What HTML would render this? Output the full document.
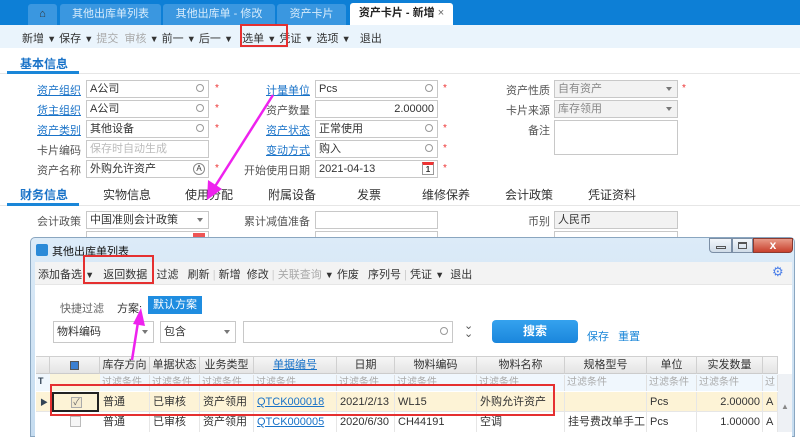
<!DOCTYPE html>
<html><head><meta charset="utf-8"><style>
*{margin:0;padding:0;box-sizing:border-box}
body{width:800px;height:432px;overflow:hidden;background:#fff;font-family:"Liberation Sans","Noto Sans CJK SC",sans-serif;font-size:11px;color:#333;position:relative}
.a{position:absolute;white-space:nowrap}
.tab{position:absolute;top:4px;height:21px;background:#3a97e0;color:#d8ecfb;border-radius:3px 3px 0 0;text-align:center;line-height:21px;font-size:11px}
.inp{position:absolute;height:18px;border:1px solid #c8c8c8;background:#fff;line-height:16px;padding-left:3px;font-size:11px}
.lbl{position:absolute;text-align:right;font-size:11px;color:#555}
.lk{color:#1a73c8;text-decoration:underline}
.st{position:absolute;color:#e33;font-size:10px}
.q{position:absolute;right:4px;top:3px;width:8px;height:8px;border:1.5px solid #999;border-radius:50%}
.dd{position:absolute;right:5px;top:6px;border:3px solid transparent;border-top:4px solid #777}
.th{position:absolute;top:357px;height:17px;line-height:17px;text-align:center;border-right:1px solid #d0d0d0;font-size:11px;color:#333}
.fc{position:absolute;top:375px;height:16px;line-height:16px;color:#aaa;padding-left:2px;border-right:1px solid #e0e0e0;font-size:10px;overflow:hidden}
.c{position:absolute;height:20px;line-height:20px;padding-left:3px;border-right:1px solid #e6e6e6;font-size:11px;overflow:hidden}
</style></head><body>
<div class="a" style="left:0;top:0;width:800px;height:25px;background:#0d7fd6"></div>
<div class="tab" style="left:28px;width:29px;color:#333">&#8962;</div>
<div class="tab" style="left:60px;width:101px">其他出库单列表</div>
<div class="tab" style="left:163px;width:112px">其他出库单 - 修改</div>
<div class="tab" style="left:277px;width:69px">资产卡片</div>
<div class="tab" style="left:350px;width:103px;background:#fff;color:#222;font-weight:bold;top:3px;height:22px">资产卡片 - 新增 <span style="color:#666;font-weight:normal">×</span></div>
<div class="a" style="left:0;top:25px;width:800px;height:23px;background:#eaf4fc"></div>
<div class="a" style="left:22px;top:30px;font-size:11px">新增 <small>▼</small> 保存 <small>▼</small> <span style="color:#aaa">提交</span>&nbsp; <span style="color:#aaa">审核</span> <small>▼</small> 前一 <small>▼</small> 后一 <small>▼</small>&nbsp;&nbsp; 选单 <small>▼</small> 凭证 <small>▼</small> 选项 <small>▼</small>&nbsp;&nbsp; 退出</div>
<div class="a" style="left:240px;top:24px;width:48px;height:23px;border:2px solid #e53030"></div>
<div class="a" style="left:20px;top:55px;color:#1a73c8;font-weight:bold;font-size:12px">基本信息</div>
<div class="a" style="left:0;top:73px;width:800px;height:1px;background:#e6e6e6"></div>
<div class="a" style="left:7px;top:71px;width:72px;height:3px;background:#1a86d8"></div>

<div class="lbl" style="left:0;width:81px;top:82px"><span class="lk">资产组织</span></div>
<div class="inp" style="left:86px;top:80px;width:123px">A公司<i class="q"></i></div><span class="st" style="left:215px;top:83px">*</span>
<div class="lbl" style="left:0;width:81px;top:102px"><span class="lk">货主组织</span></div>
<div class="inp" style="left:86px;top:100px;width:123px">A公司<i class="q"></i></div><span class="st" style="left:215px;top:103px">*</span>
<div class="lbl" style="left:0;width:81px;top:122px"><span class="lk">资产类别</span></div>
<div class="inp" style="left:86px;top:120px;width:123px">其他设备<i class="q"></i></div><span class="st" style="left:215px;top:123px">*</span>
<div class="lbl" style="left:0;width:81px;top:142px">卡片编码</div>
<div class="inp" style="left:86px;top:140px;width:123px;color:#bbb">保存时自动生成</div>
<div class="lbl" style="left:0;width:81px;top:162px">资产名称</div>
<div class="inp" style="left:86px;top:160px;width:123px">外购允许资产<i style="position:absolute;right:3px;top:2px;width:12px;height:12px;border:1px solid #888;border-radius:50%;font-size:8px;line-height:10px;text-align:center;font-style:normal">A</i></div><span class="st" style="left:215px;top:163px">*</span>

<div class="lbl" style="left:230px;width:80px;top:82px"><span class="lk">计量单位</span></div>
<div class="inp" style="left:315px;top:80px;width:123px">Pcs<i class="q"></i></div><span class="st" style="left:443px;top:83px">*</span>
<div class="lbl" style="left:230px;width:80px;top:102px">资产数量</div>
<div class="inp" style="left:315px;top:100px;width:123px;text-align:right;padding-right:3px">2.00000</div>
<div class="lbl" style="left:230px;width:80px;top:122px"><span class="lk">资产状态</span></div>
<div class="inp" style="left:315px;top:120px;width:123px">正常使用<i class="q"></i></div><span class="st" style="left:443px;top:123px">*</span>
<div class="lbl" style="left:230px;width:80px;top:142px"><span class="lk">变动方式</span></div>
<div class="inp" style="left:315px;top:140px;width:123px">购入<i class="q"></i></div><span class="st" style="left:443px;top:143px">*</span>
<div class="lbl" style="left:230px;width:80px;top:162px">开始使用日期</div>
<div class="inp" style="left:315px;top:160px;width:123px">2021-04-13<i style="position:absolute;right:3px;top:1px;width:12px;height:13px;border:1px solid #999;border-top:3px solid #e33;font-size:8px;line-height:9px;text-align:center;font-style:normal;font-weight:bold">1</i></div><span class="st" style="left:443px;top:163px">*</span>

<div class="lbl" style="left:470px;width:80px;top:82px">资产性质</div>
<div class="inp" style="left:554px;top:80px;width:124px;background:#f2f2f2;color:#888">自有资产<i class="dd"></i></div><span class="st" style="left:682px;top:83px">*</span>
<div class="lbl" style="left:470px;width:80px;top:102px">卡片来源</div>
<div class="inp" style="left:554px;top:100px;width:124px;background:#f2f2f2;color:#888">库存领用<i class="dd"></i></div>
<div class="lbl" style="left:470px;width:80px;top:122px">备注</div>
<div class="inp" style="left:554px;top:120px;width:124px;height:35px"></div>

<div class="a" style="left:20px;top:186px;color:#1a73c8;font-weight:bold;font-size:12px">财务信息</div>
<div class="a" style="left:103px;top:186px;font-size:12px">实物信息</div>
<div class="a" style="left:185px;top:186px;font-size:12px">使用分配</div>
<div class="a" style="left:268px;top:186px;font-size:12px">附属设备</div>
<div class="a" style="left:357px;top:186px;font-size:12px">发票</div>
<div class="a" style="left:422px;top:186px;font-size:12px">维修保养</div>
<div class="a" style="left:505px;top:186px;font-size:12px">会计政策</div>
<div class="a" style="left:588px;top:186px;font-size:12px">凭证资料</div>
<div class="a" style="left:0;top:205px;width:800px;height:1px;background:#e6e6e6"></div>
<div class="a" style="left:7px;top:203px;width:72px;height:3px;background:#1a86d8"></div>
<div class="lbl" style="left:0;width:81px;top:213px">会计政策</div>
<div class="inp" style="left:86px;top:211px;width:123px">中国准则会计政策<i class="dd"></i></div>
<div class="lbl" style="left:230px;width:80px;top:213px">累计减值准备</div>
<div class="inp" style="left:315px;top:211px;width:123px"></div>
<div class="lbl" style="left:470px;width:80px;top:213px">币别</div>
<div class="inp" style="left:554px;top:211px;width:124px;background:#f2f2f2">人民币</div>
<div class="inp" style="left:86px;top:231px;width:123px"><i style="position:absolute;right:3px;top:1px;width:12px;height:8px;background:#e55"></i></div>
<div class="inp" style="left:315px;top:231px;width:123px"></div>
<div class="inp" style="left:554px;top:231px;width:124px"></div>

<div class="a" style="left:30px;top:237px;width:765px;height:200px;background:linear-gradient(#dcebf8,#c5dcf0);border:1px solid #8aa6c0;border-radius:5px 5px 0 0"></div>
<div class="a" style="left:36px;top:244px;width:12px;height:12px;background:#2b8ad8;border-radius:2px"></div>
<div class="a" style="left:52px;top:243px;font-size:11px;color:#111">其他出库单列表</div>
<div class="a" style="left:709px;top:238px;width:23px;height:15px;border:1px solid #7b8ea5;border-radius:0 0 0 4px;background:linear-gradient(#f2f6fa,#d0dce8)"><i style="position:absolute;left:6px;top:7px;width:10px;height:3px;border:1px solid #555"></i></div>
<div class="a" style="left:732px;top:238px;width:21px;height:15px;border:1px solid #7b8ea5;background:linear-gradient(#f2f6fa,#d0dce8)"><i style="position:absolute;left:5px;top:3px;width:9px;height:7px;border:1px solid #555;border-top-width:2px"></i></div>
<div class="a" style="left:753px;top:238px;width:40px;height:15px;border:1px solid #8b3a30;border-radius:0 0 4px 0;background:linear-gradient(#e89a88,#c8402c);color:#fff;text-align:center;font-weight:bold;line-height:13px;font-size:12px">x</div>
<div class="a" style="left:35px;top:262px;width:757px;height:175px;background:#fff"></div>
<div class="a" style="left:35px;top:262px;width:757px;height:23px;background:#f3f3f3;border-bottom:1px solid #e6e6e6"></div>
<div class="a" style="left:38px;top:266px;font-size:11px">添加备选 <small>▼</small>&nbsp;&nbsp; 返回数据&nbsp;&nbsp; 过滤&nbsp;&nbsp; 刷新 <span style="color:#ccc">|</span> 新增&nbsp; 修改 <span style="color:#ccc">|</span> <span style="color:#aaa">关联查询</span> <small>▼</small> 作废&nbsp;&nbsp; 序列号 <span style="color:#ccc">|</span> 凭证 <small>▼</small>&nbsp; 退出</div>
<div class="a" style="left:772px;top:264px;color:#4a7ee8;font-size:13px">⚙</div>
<div class="a" style="left:83px;top:255px;width:71px;height:29px;border:2px solid #e53030"></div>

<div class="a" style="left:60px;top:300px;color:#666">快捷过滤</div>
<div class="a" style="left:117px;top:300px;color:#333">方案:</div>
<div class="a" style="left:148px;top:296px;width:54px;height:18px;background:#1f8de0;color:#fff;text-align:center;line-height:18px">默认方案</div>
<div class="inp" style="left:53px;top:321px;width:101px;height:22px;line-height:20px">物料编码<i class="dd" style="top:8px"></i></div>
<div class="inp" style="left:160px;top:321px;width:76px;height:22px;line-height:20px">包含<i class="dd" style="top:8px"></i></div>
<div class="inp" style="left:243px;top:321px;width:210px;height:22px"><i class="q" style="top:5px"></i></div>
<div class="a" style="left:464px;top:322px;color:#555;font-size:11px;line-height:8px">⌄<br>⌄</div>
<div class="a" style="left:492px;top:320px;width:86px;height:23px;background:linear-gradient(#35a2ee,#1a86dc);border-radius:4px;color:#fff;text-align:center;line-height:23px;font-weight:bold;font-size:12px">搜索</div>
<div class="a" style="left:587px;top:328px;color:#1a86d8">保存&nbsp;&nbsp; 重置</div>

<div class="a" style="left:36px;top:356px;width:742px;height:18px;background:linear-gradient(#f6f6f6,#e4e4e4);border-top:1px solid #d0d0d0;border-bottom:1px solid #ccc"></div>
<div class="th" style="left:36px;width:14px"></div>
<div class="th" style="left:50px;width:50px"><i style="display:inline-block;width:9px;height:9px;background:#3b7fd0;border:1px solid #555;vertical-align:middle"></i></div>
<div class="th" style="left:100px;width:50px">库存方向</div>
<div class="th" style="left:150px;width:50px">单据状态</div>
<div class="th" style="left:200px;width:54px">业务类型</div>
<div class="th" style="left:254px;width:83px"><span class="lk">单据编号</span></div>
<div class="th" style="left:337px;width:58px">日期</div>
<div class="th" style="left:395px;width:82px">物料编码</div>
<div class="th" style="left:477px;width:88px">物料名称</div>
<div class="th" style="left:565px;width:82px">规格型号</div>
<div class="th" style="left:647px;width:50px">单位</div>
<div class="th" style="left:697px;width:66px">实发数量</div>
<div class="th" style="left:763px;width:15px"></div>
<div class="a" style="left:36px;top:374px;width:742px;height:17px;background:#f0f7fd"></div>
<div class="a" style="left:38px;top:376px;font-size:9px;font-weight:bold;color:#345">T</div>
<div class="a" style="left:50px;top:374px;width:50px;height:17px;background:#fbf5dc"></div>
<div class="fc" style="left:100px;width:50px">过滤条件</div><div class="fc" style="left:150px;width:50px">过滤条件</div><div class="fc" style="left:200px;width:54px">过滤条件</div><div class="fc" style="left:254px;width:83px">过滤条件</div><div class="fc" style="left:337px;width:58px">过滤条件</div><div class="fc" style="left:395px;width:82px">过滤条件</div><div class="fc" style="left:477px;width:88px">过滤条件</div><div class="fc" style="left:565px;width:82px">过滤条件</div><div class="fc" style="left:647px;width:50px">过滤条件</div><div class="fc" style="left:697px;width:66px">过滤条件</div><div class="fc" style="left:763px;width:15px">过</div>
<div class="a" style="left:36px;top:392px;width:742px;height:20px;background:#fdf3d6;border-bottom:1px solid #e6e6e6"></div>
<div class="a" style="left:40px;top:397px;font-size:8px;color:#345">▶</div>
<div class="a" style="left:52px;top:392px;width:47px;height:20px;border:2px solid #222"><i style="position:absolute;left:17px;top:3px;width:11px;height:11px;border:1px solid #aaa;background:#f4ead0;font-size:9px;line-height:9px;text-align:center;font-style:normal;color:#666">✓</i></div>
<div class="c" style="left:100px;top:392px;width:50px">普通</div><div class="c" style="left:150px;top:392px;width:50px">已审核</div><div class="c" style="left:200px;top:392px;width:54px">资产领用</div><div class="c lk" style="left:254px;top:392px;width:83px">QTCK000018</div><div class="c" style="left:337px;top:392px;width:58px">2021/2/13</div><div class="c" style="left:395px;top:392px;width:82px">WL15</div><div class="c" style="left:477px;top:392px;width:88px">外购允许资产</div><div class="c" style="left:565px;top:392px;width:82px"></div><div class="c" style="left:647px;top:392px;width:50px">Pcs</div><div class="c" style="left:697px;top:392px;width:66px;text-align:right;padding-right:2px">2.00000</div><div class="c" style="left:763px;top:392px;width:15px">A</div>
<div class="a" style="left:70px;top:416px;width:11px;height:11px;border:1px solid #bbb;background:#f6f6f6"></div>
<div class="c" style="left:100px;top:412px;width:50px">普通</div><div class="c" style="left:150px;top:412px;width:50px">已审核</div><div class="c" style="left:200px;top:412px;width:54px">资产领用</div><div class="c lk" style="left:254px;top:412px;width:83px">QTCK000005</div><div class="c" style="left:337px;top:412px;width:58px">2020/6/30</div><div class="c" style="left:395px;top:412px;width:82px">CH44191</div><div class="c" style="left:477px;top:412px;width:88px">空调</div><div class="c" style="left:565px;top:412px;width:82px">挂号费改单手工反</div><div class="c" style="left:647px;top:412px;width:50px">Pcs</div><div class="c" style="left:697px;top:412px;width:66px;text-align:right;padding-right:2px">1.00000</div><div class="c" style="left:763px;top:412px;width:15px">A</div>
<div class="a" style="left:778px;top:374px;width:14px;height:58px;background:#eef1f5;color:#888;font-size:8px;text-align:center;padding-top:28px">▲</div>
<div class="a" style="left:50px;top:384px;width:505px;height:32px;border:2px solid #e53030"></div>

<svg class="a" style="left:0;top:0" width="800" height="432">
<line x1="273" y1="95" x2="214" y2="188" stroke="#ee22ee" stroke-width="2.5"/>
<polygon points="207,200 208,180 222,189" fill="#ee22ee"/>
<line x1="132" y1="360" x2="138" y2="322" stroke="#ee22ee" stroke-width="2.5"/>
<polygon points="141,308 133,324 145,326" fill="#ee22ee"/>
</svg>
</body></html>
